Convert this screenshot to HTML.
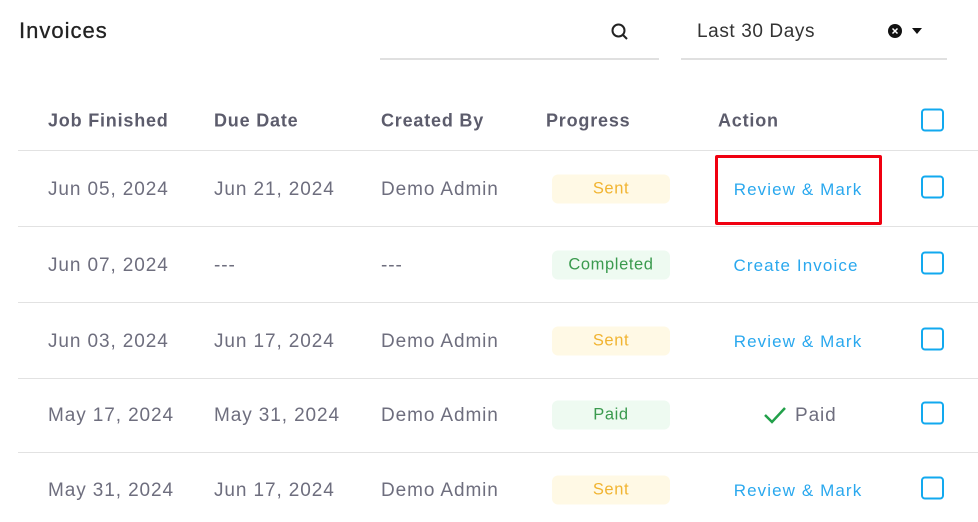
<!DOCTYPE html>
<html><head><style>
body{margin:0;width:978px;height:522px;background:#fff;font-family:"Liberation Sans",sans-serif;position:relative;overflow:hidden}
.a{position:absolute;white-space:nowrap}
.t{font-size:19px;letter-spacing:0.9px;color:#6e6e7e;transform:translateY(-45%)}
.h{font-size:18px;letter-spacing:0.8px;font-weight:bold;color:#5c5c6c;transform:translateY(-45%)}
.sep{position:absolute;left:18px;width:960px;height:1px;background:#e2e2e2}
.cb{position:absolute;left:921px;width:19px;height:19px;border:2.5px solid #12a9ef;border-radius:4px;transform:translateY(-50%)}
.badge{position:absolute;left:552px;width:118px;height:29px;border-radius:6px;font-size:16.5px;letter-spacing:0.6px;text-align:center;line-height:29px;transform:translateY(-50%)}
.sent{background:#fff9e5;color:#f1b431}
.grn{background:#eefaf1;color:#3a9a4e}
.act{position:absolute;left:717px;width:162px;text-align:center;font-size:17px;letter-spacing:1.1px;color:#2aa8ee;transform:translateY(-45%)}
</style></head><body>
<div class="a" style="left:19px;top:18px;font-size:22px;letter-spacing:1px;color:#222;-webkit-text-stroke:0.3px #222">Invoices</div>
<svg class="a" style="left:610px;top:22px" width="20" height="20" viewBox="0 0 20 20"><circle cx="8.5" cy="8.5" r="6" fill="none" stroke="#222" stroke-width="2"/><path d="M13 13l4 4" stroke="#222" stroke-width="2"/></svg>
<div class="a" style="left:380px;top:58px;width:279px;height:2px;background:#e0e0e0"></div>
<div class="a" style="left:697px;top:21px;font-size:19px;letter-spacing:0.6px;color:#333">Last 30 Days</div>
<svg class="a" style="left:887px;top:23px" width="36" height="16"><circle cx="8" cy="8" r="7" fill="#111"/><path d="M5.5 5.5l5 5M10.5 5.5l-5 5" stroke="#fff" stroke-width="1.5"/><path d="M25 5h10l-5 6z" fill="#111"/></svg>
<div class="a" style="left:681px;top:58px;width:266px;height:2px;background:#e0e0e0"></div>

<div class="a h" style="left:48px;top:120px">Job Finished</div>
<div class="a h" style="left:214px;top:120px">Due Date</div>
<div class="a h" style="left:381px;top:120px">Created By</div>
<div class="a h" style="left:546px;top:120px">Progress</div>
<div class="a h" style="left:718px;top:120px">Action</div>
<div class="cb" style="top:120px"></div>
<div class="sep" style="top:150px"></div>

<div class="a t" style="left:48px;top:189px">Jun 05, 2024</div>
<div class="a t" style="left:214px;top:189px">Jun 21, 2024</div>
<div class="a t" style="left:381px;top:189px">Demo Admin</div>
<div class="badge sent" style="top:189px">Sent</div>
<div class="act" style="top:189px">Review &amp; Mark</div>
<div class="a" style="left:715px;top:155px;width:161px;height:64px;border:3px solid #f00010;border-radius:2px"></div>
<div class="cb" style="top:187px"></div>
<div class="sep" style="top:226px"></div>

<div class="a t" style="left:48px;top:265px">Jun 07, 2024</div>
<div class="a t" style="left:214px;top:265px">---</div>
<div class="a t" style="left:381px;top:265px">---</div>
<div class="badge grn" style="top:265px">Completed</div>
<div class="act" style="top:265px;left:715px">Create Invoice</div>
<div class="cb" style="top:263px"></div>
<div class="sep" style="top:302px"></div>

<div class="a t" style="left:48px;top:341px">Jun 03, 2024</div>
<div class="a t" style="left:214px;top:341px">Jun 17, 2024</div>
<div class="a t" style="left:381px;top:341px">Demo Admin</div>
<div class="badge sent" style="top:341px">Sent</div>
<div class="act" style="top:341px">Review &amp; Mark</div>
<div class="cb" style="top:339px"></div>
<div class="sep" style="top:378px"></div>

<div class="a t" style="left:48px;top:415px">May 17, 2024</div>
<div class="a t" style="left:214px;top:415px">May 31, 2024</div>
<div class="a t" style="left:381px;top:415px">Demo Admin</div>
<div class="badge grn" style="top:415px">Paid</div>
<svg class="a" style="left:763px;top:406px" width="24" height="18"><path d="M2 9l7 7L22 2" fill="none" stroke="#22a04a" stroke-width="2.5"/></svg>
<div class="a t" style="left:795px;top:415px">Paid</div>
<div class="cb" style="top:413px"></div>
<div class="sep" style="top:452px"></div>

<div class="a t" style="left:48px;top:490px">May 31, 2024</div>
<div class="a t" style="left:214px;top:490px">Jun 17, 2024</div>
<div class="a t" style="left:381px;top:490px">Demo Admin</div>
<div class="badge sent" style="top:490px">Sent</div>
<div class="act" style="top:490px">Review &amp; Mark</div>
<div class="cb" style="top:488px"></div>
</body></html>
